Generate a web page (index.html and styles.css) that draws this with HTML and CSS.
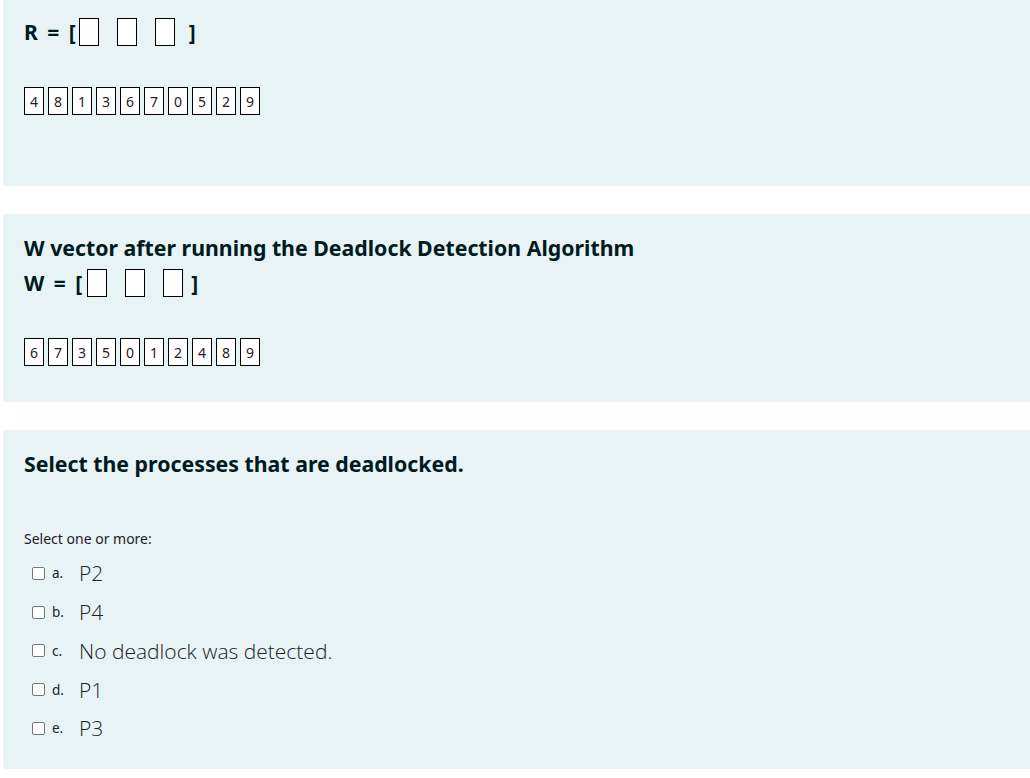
FILE: index.html
```html
<!DOCTYPE html>
<html>
<head>
<meta charset="utf-8">
<link rel="stylesheet" href="styles.css">
</head>
<body>
<div class="page">
  <section class="panel panel-r">
    <div class="vec-line vec-r">
      <span class="vec-label">R = [</span>
      <span class="slot first"></span>
      <span class="slot"></span>
      <span class="slot"></span>
      <span class="vec-close">]</span>
    </div>
    <div class="tiles">
      <span class="tile">4</span><span class="tile">8</span><span class="tile">1</span><span class="tile">3</span><span class="tile">6</span><span class="tile">7</span><span class="tile">0</span><span class="tile">5</span><span class="tile">2</span><span class="tile">9</span>
    </div>
  </section>

  <section class="panel panel-w">
    <h2 class="q-title">W vector after running the Deadlock Detection Algorithm</h2>
    <div class="vec-line vec-w">
      <span class="vec-label">W = [</span>
      <span class="slot first"></span>
      <span class="slot"></span>
      <span class="slot"></span>
      <span class="vec-close">]</span>
    </div>
    <div class="tiles">
      <span class="tile">6</span><span class="tile">7</span><span class="tile">3</span><span class="tile">5</span><span class="tile">0</span><span class="tile">1</span><span class="tile">2</span><span class="tile">4</span><span class="tile">8</span><span class="tile">9</span>
    </div>
  </section>

  <section class="panel panel-q">
    <h2 class="q-title">Select the processes that are deadlocked.</h2>
    <div class="prompt">Select one or more:</div>
    <div class="answers">
      <label class="answer"><span class="box"></span><span class="letter">a.</span><span class="text">P2</span></label>
      <label class="answer"><span class="box"></span><span class="letter">b.</span><span class="text">P4</span></label>
      <label class="answer"><span class="box"></span><span class="letter">c.</span><span class="text">No deadlock was detected.</span></label>
      <label class="answer"><span class="box"></span><span class="letter">d.</span><span class="text">P1</span></label>
      <label class="answer"><span class="box"></span><span class="letter">e.</span><span class="text">P3</span></label>
    </div>
  </section>
</div>
</body>
</html>
```

FILE: styles.css
```css
html, body {
  margin: 0;
  padding: 0;
  background: #ffffff;
}

body {
  font-family: "Noto Sans", "Open Sans", sans-serif;
  color: #001a1e;
}

.page {
  padding-left: 3px;
  width: 1040px;
}

.panel {
  background: #e7f3f5;
  border-radius: 4px;
  padding-left: 21px;
  box-sizing: border-box;
}

.panel-r {
  height: 186px;
  padding-top: 18px;
  border-radius: 0 0 4px 4px;
}

.panel-w {
  margin-top: 28px;
  height: 188px;
  padding-top: 21px;
}

.panel-q {
  margin-top: 28px;
  height: 339px;
  padding-top: 21px;
}

.q-title {
  margin: 0;
  font-size: 21.3px;
  line-height: 26px;
  font-weight: 700;
}

.vec-line {
  display: flex;
  align-items: center;
  height: 28px;
  font-size: 21px;
  font-weight: 700;
}

.vec-w {
  margin-top: 8px;
}

.vec-label {
  word-spacing: 4px;
  margin-right: 1px;
}

.vec-w .vec-label {
  margin-right: 3px;
}

.slot {
  width: 18px;
  height: 26px;
  border: 1px solid #000;
  background: #fff;
  margin-right: 18px;
}

.slot.first {
  margin-left: 2px;
}

.vec-close {
  margin-left: -4px;
}

.vec-w .vec-close {
  margin-left: -10px;
}

.tiles {
  display: flex;
  gap: 4px;
  margin-top: 41px;
}

.tile {
  width: 18px;
  height: 26px;
  border: 1px solid #000;
  background: #fff;
  display: flex;
  align-items: center;
  justify-content: center;
  font-size: 14px;
  color: #1d2125;
}

.prompt {
  margin-top: 52px;
  font-size: 14px;
  line-height: 20px;
  color: #1d2125;
}

.answers {
  margin-top: 5px;
  padding-left: 8px;
}

.answer {
  display: flex;
  align-items: center;
  height: 38.75px;
}

.box {
  width: 11px;
  height: 11px;
  border: 1px solid #767676;
  border-radius: 2px;
  background: #fff;
  margin-right: 7px;
}

.letter {
  font-size: 13.5px;
  width: 27px;
  color: #1d2125;
}

.text {
  font-family: "Open Sans", "Noto Sans", sans-serif;
  font-size: 21px;
  font-weight: 300;
  color: #1d2125;
}
```
